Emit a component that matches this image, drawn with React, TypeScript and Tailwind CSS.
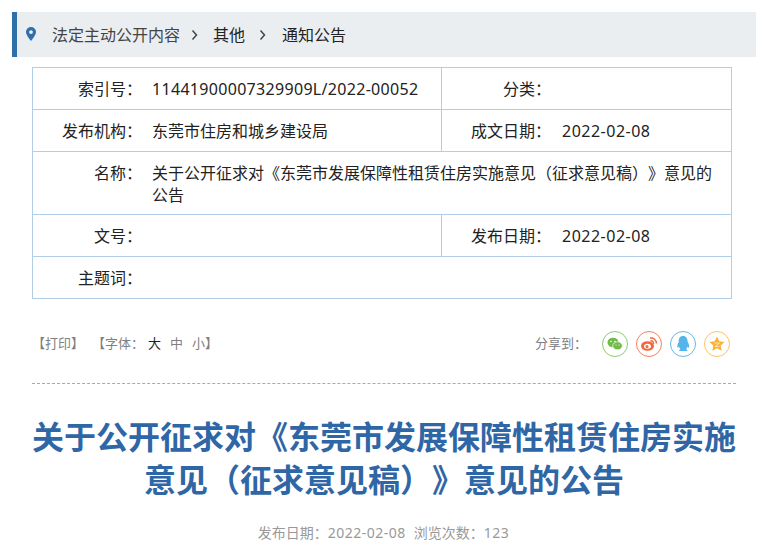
import React from 'react';

const font = { fontFamily: '"Noto Sans", "Noto Sans CJK SC", sans-serif' };

function Row({ label, value, label2, value2, tall, latin }: { label: string; value: string; label2?: string; value2?: string; tall?: boolean; latin?: boolean }) {
  return (
    <div className={`flex border-b border-[#b0cee8] last:border-b-0 last:h-[41px] ${tall ? 'h-[63px]' : 'h-[42px]'}`}>
      <div className="w-[109px] shrink-0 pt-[10px] text-right leading-[22px]">{label}</div>
      <div className={`${label2 !== undefined ? 'w-[300px] border-r border-[#b0cee8]' : 'flex-1'} pl-[10px] pr-[18px] pt-[10px] leading-[22px] ${latin ? 'tracking-[0.31px]' : ''}`}>{value}</div>
      {label2 !== undefined && (
        <>
          <div className="w-[109px] shrink-0 pt-[10px] text-right leading-[22px]">{label2}</div>
          <div className="flex-1 pl-[11px] pt-[10px] leading-[22px] tracking-[0.5px]">{value2}</div>
        </>
      )}
    </div>
  );
}

function ShareIcon({ color, children }: { color: string; children: React.ReactNode }) {
  return (
    <div className="w-[26px] h-[26px] rounded-full border flex items-center justify-center" style={{ borderColor: color }}>
      <svg width="18" height="18" viewBox="0 0 18 18">{children}</svg>
    </div>
  );
}

export default function App() {
  return (
    <div className="w-[773px] h-[545px] overflow-hidden bg-white pt-[12px] text-[16px] text-[#222] [text-spacing-trim:space-all]" style={font}>
      {/* Breadcrumb */}
      <div className="ml-[12px] w-[744px] h-[45px] bg-[#ebeef1] border-l-[5px] border-[#2f70a9] flex items-center pl-[8px]">
        <svg width="12" height="16" viewBox="0 0 12 16" className="mr-[15px] mb-[1px]">
          <path fillRule="evenodd" d="M6 1a5 5 0 0 0-5 5c0 3.400 5 9 5 9s5-5.600 5-9a5 5 0 0 0-5-5zm0 3.200a1.900 1.900 0 1 1 0 3.800 1.900 1.900 0 0 1 0-3.800z" fill="#2f70a9" />
        </svg>
        <span className="text-[#444]">法定主动公开内容</span>
        <svg width="10" height="12" viewBox="0 0 10 12" className="ml-[10px] mr-[13px]"><path d="M2.500 1.500l4 4.500-4 4.500" fill="none" stroke="#444" strokeWidth="1.500" /></svg>
        <span>其他</span>
        <svg width="10" height="12" viewBox="0 0 10 12" className="ml-[13px] mr-[14px]"><path d="M2.500 1.500l4 4.500-4 4.500" fill="none" stroke="#444" strokeWidth="1.500" /></svg>
        <span>通知公告</span>
      </div>

      {/* Meta table */}
      <div className="ml-[32px] mt-[10px] w-[700px] border border-[#b0cee8]">
        <Row label="索引号：" value="11441900007329909L/2022-00052" label2="分类：" value2="" latin />
        <Row label="发布机构：" value="东莞市住房和城乡建设局" label2="成文日期：" value2="2022-02-08" />
        <Row label="名称：" value="关于公开征求对《东莞市发展保障性租赁住房实施意见（征求意见稿）》意见的公告" tall />
        <Row label="文号：" value="" label2="发布日期：" value2="2022-02-08" />
        <Row label="主题词：" value="" />
      </div>

      {/* Tools */}
      <div className="ml-[32px] mt-[30px] w-[700px] h-[30px] flex items-center justify-between text-[13px] text-[#808080]">
        <div className="flex">
          <span>【打印】</span>
          <span className="ml-[8px]">【字体：</span>
          <span className="ml-[4px] text-[#222]">大</span>
          <span className="ml-[9px]">中</span>
          <span className="ml-[9px]">小】</span>
        </div>
        <div className="flex items-center">
          <span className="mr-[15px]">分享到：</span>
          <div className="flex gap-[8px] mr-[2px]">
            <ShareIcon color="#8ccb6c">
              <ellipse cx="7" cy="7.500" rx="5.500" ry="4.800" fill="#6fbb45" />
              <ellipse cx="11.500" cy="10.800" rx="4.800" ry="4" fill="#6fbb45" stroke="#fff" strokeWidth="0.700" />
              <circle cx="5" cy="6.500" r="0.800" fill="#fff" />
              <circle cx="9" cy="6.500" r="0.800" fill="#fff" />
              <circle cx="10" cy="10" r="0.600" fill="#fff" />
              <circle cx="13" cy="10" r="0.600" fill="#fff" />
            </ShareIcon>
            <ShareIcon color="#f5805a">
              <ellipse cx="7.500" cy="11" rx="6.500" ry="4.800" fill="#f2683c" />
              <ellipse cx="7.500" cy="11.300" rx="3.500" ry="2.500" fill="#fff" />
              <circle cx="7" cy="11.500" r="1.500" fill="#f2683c" />
              <path d="M10 3a5.500 5.500 0 0 1 6.500 5.500M10.500 5.800a2.500 2.500 0 0 1 3 3" fill="none" stroke="#f2683c" strokeWidth="1.500" />
            </ShareIcon>
            <ShareIcon color="#63b8ec">
              <path d="M9 1c3.200 0 4.700 2.700 4.700 6 1 1.500 1.800 3.500 1.300 5.500-.5.500-1.200-.3-1.500-1-.2 1.200-.8 2.200-1.500 2.800 1 .4 1.500.8 1.300 1.700H5.200c-.2-.9.300-1.300 1.300-1.700-.7-.6-1.300-1.600-1.500-2.800-.3.700-1 1.500-1.500 1-.5-2 .3-4 1.300-5.500C4.300 3.700 5.800 1 9 1z" fill="#57b4ea" />
            </ShareIcon>
            <ShareIcon color="#fbc55f">
              <path d="M9 1.500l2.300 4.800 5.200.7-3.800 3.600 1 5.200L9 13.300l-4.700 2.500 1-5.200L1.500 7l5.200-.7z" fill="#f9b233" />
              <path d="M6.500 8h5L7 11.500h4.500" fill="none" stroke="#fde3b0" strokeWidth="1" />
            </ShareIcon>
          </div>
        </div>
      </div>

      <div className="ml-[32px] mt-[24px] w-[704px] border-t border-dashed border-[#aaa]" />

      {/* Title */}
      <h1 className="ml-[32px] w-[704px] mt-[30px] text-center text-[32px] leading-[43px] font-bold text-[#2f66a6]" style={{ fontFamily: '"Noto Sans CJK SC", sans-serif' }}>
        关于公开征求对《东莞市发展保障性租赁住房实施意见（征求意见稿）》意见的公告
      </h1>

      <div className="mt-[23px] pr-[6px] flex justify-center text-[14px] leading-[20px] text-[#999]">
        <span>发布日期：<span className="tracking-[0.5px]">2022-02-08</span></span>
        <span className="ml-[8px]">浏览次数：<span className="tracking-[0.5px]">123</span></span>
      </div>
    </div>
  );
}
